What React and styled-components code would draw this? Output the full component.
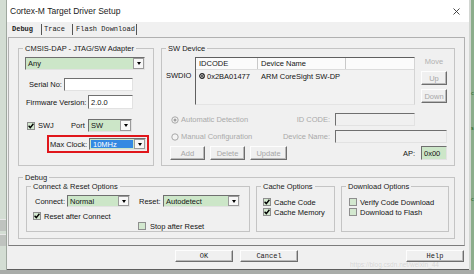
import React from "react";
import styled, { createGlobalStyle } from "styled-components";

const GlobalStyle = createGlobalStyle`
  html, body {
    margin: 0;
    padding: 0;
    background: #b1b4b1;
  }
  body {
    font-family: "Liberation Sans", Arial, sans-serif;
    font-size: 7.5px;
    color: #141414;
  }
  * {
    box-sizing: border-box;
  }
`;

const Screen = styled.div`
  position: relative;
  display: flex;
  width: 474px;
  height: 274px;
  overflow: hidden;
  background: #a9aca9;
`;

const LeftStrip = styled.div`
  width: 7px;
  height: 270px;
  background: #d3ddd3;
  border-right: 1px solid #9fa89f;
  display: flex;
  flex-direction: column;
  justify-content: flex-end;
  gap: 3px;
  padding-bottom: 24px;
`;

const StripBlock = styled.div`
  height: 12px;
  background: #bfc3bf;
  border-top: 1px solid #e8e8e8;
`;

const RightStrip = styled.div`
  width: 5px;
  height: 270px;
  background: #8bad8b;
  border-left: 2px solid #d2d6d2;
  display: flex;
  flex-direction: column;
  padding-top: 91px;
  color: #2d6b2d;
  font-weight: bold;
  font-size: 4px;
`;

const StripLetter = styled.span`
  margin-top: ${(p) => p.$mt}px;
  line-height: 5px;
`;

const Window = styled.div`
  width: 462px;
  height: 270px;
  display: flex;
  flex-direction: column;
  background: #f0f0f0;
  border-bottom: 1px solid #5e5e5e;
`;

const TitleBar = styled.div`
  height: 22px;
  flex: none;
  background: #fff;
  display: flex;
  align-items: center;
  justify-content: space-between;
  padding: 0 9px 0 3px;
  font-size: 8.5px;
  color: #1b1b1b;
`;

const Tabs = styled.div`
  height: 15px;
  flex: none;
  display: flex;
  align-items: center;
  padding-left: 5px;
  font-family: "Liberation Mono", "Courier New", monospace;
  font-size: 7px;
`;

const Tab = styled.div`
  height: 11px;
  line-height: 11px;
  padding: 0 ${(p) => p.$pr}px 0 ${(p) => p.$pl}px;
  border-right: 1px solid #555;
  font-weight: ${(p) => (p.$active ? "bold" : "normal")};
  color: #222;
`;

const TabPage = styled.div`
  margin-left: 1px;
  width: 457px;
  height: 209px;
  flex: none;
  border: 1px solid #b0b0b0;
  border-bottom-color: #7c7c7c;
  padding: 6px 9px 0;
  display: flex;
  flex-direction: column;
`;

const TopRow = styled.div`
  display: flex;
  gap: 7px;
  height: 122px;
`;

const Group = styled.fieldset`
  margin: 0;
  padding: 0;
  min-width: 0;
  width: ${(p) => p.$w}px;
  height: ${(p) => p.$h}px;
  margin-top: ${(p) => p.$mt || 0}px;
  border: 1px solid #c4c4c4;
  flex: none;
`;

const Legend = styled.legend`
  padding: 0 2px;
  margin-left: 4px;
  font-size: 7.5px;
  line-height: 9px;
  color: #1a1a1a;
`;

const Body = styled.div`
  display: flex;
  flex-direction: column;
  padding: ${(p) => p.$pad};
`;

const Row = styled.div`
  display: flex;
  align-items: ${(p) => (p.$top ? "flex-start" : "center")};
  height: ${(p) => p.$h || 13}px;
  margin-top: ${(p) => p.$mt || 0}px;
  padding-left: ${(p) => p.$pl || 0}px;
  gap: ${(p) => p.$gap || 0}px;
`;

const Label = styled.span`
  width: ${(p) => (p.$w ? `${p.$w}px` : "auto")};
  flex: none;
  white-space: nowrap;
  margin-left: ${(p) => p.$ml || 0}px;
  color: ${(p) => (p.$disabled ? "#a9a9a9" : "#141414")};
`;

const Field = styled.div`
  width: ${(p) => p.$w}px;
  height: ${(p) => p.$h || 13}px;
  flex: none;
  margin-left: ${(p) => p.$ml || 0}px;
  display: flex;
  align-items: stretch;
  background: ${(p) => (p.$green ? "#cce6c8" : p.$disabled ? "#f0f0f0" : "#fff")};
  border: 1px solid;
  border-color: #6f6f6f #e2e2e2 #e2e2e2 #6f6f6f;
`;

const FieldText = styled.span`
  flex: 1;
  display: flex;
  align-items: center;
  padding-left: 2px;
  white-space: nowrap;
  background: ${(p) => (p.$selected ? "#3489e2" : "transparent")};
  color: ${(p) => (p.$selected ? "#fff" : "#141414")};
  margin: ${(p) => (p.$selected ? "1px" : "0")};
`;

const Arrow = styled.span`
  width: 11px;
  flex: none;
  display: flex;
  align-items: center;
  justify-content: center;
  background: #f7f7f7;
  border: 1px solid #9a9a9a;
  &::after {
    content: "";
    border-left: 2.5px solid transparent;
    border-right: 2.5px solid transparent;
    border-top: 3px solid #000;
  }
`;

const Select = ({ w, h, value, green = true, selected, ml }) => (
  <Field $w={w} $h={h} $green={green} $ml={ml}>
    <FieldText $selected={selected}>{value}</FieldText>
    <Arrow />
  </Field>
);

const Input = ({ w, h, value, green, disabled, ml }) => (
  <Field $w={w} $h={h} $green={green} $disabled={disabled} $ml={ml}>
    <FieldText>{value}</FieldText>
  </Field>
);

const CheckBox = styled.span`
  width: 8px;
  height: 8px;
  flex: none;
  background: #d3e8cf;
  border: 1px solid #8e8e8e;
  display: flex;
  align-items: center;
  justify-content: center;
`;

const Check = ({ checked }) => (
  <CheckBox>
    {checked && (
      <svg width="6" height="6" viewBox="0 0 6 6">
        <polyline points="0.6,2.8 2.3,4.6 5.4,0.8" fill="none" stroke="#000" strokeWidth="1.4" />
      </svg>
    )}
  </CheckBox>
);

const RadioIcon = ({ filled }) => (
  <svg width="8" height="8" viewBox="0 0 8 8" style={{ flex: "none" }}>
    <circle cx="4" cy="4" r="3.2" fill="#f4f4f4" stroke="#a8a8a8" strokeWidth="1" />
    {filled && <circle cx="4" cy="4" r="1.5" fill="#a0a0a0" />}
  </svg>
);

const WinButton = styled.div`
  width: ${(p) => p.$w}px;
  height: ${(p) => p.$h}px;
  flex: none;
  display: flex;
  align-items: center;
  justify-content: center;
  background: #f0f0f0;
  border: 1px solid;
  border-color: #fdfdfd #6e6e6e #6e6e6e #fdfdfd;
  box-shadow: inset -1px -1px 0 #b9b9b9;
  color: ${(p) => (p.$disabled ? "#a7a7a7" : "#1a1a1a")};
  font-family: ${(p) =>
    p.$mono ? '"Liberation Mono", "Courier New", monospace' : "inherit"};
  font-size: ${(p) => (p.$mono ? 7 : 7.5)}px;
`;

const RedBox = styled.div`
  margin: 3px 0 0 22px;
  width: 102px;
  height: 18px;
  border: 2px solid #e0161b;
  display: flex;
  align-items: center;
  padding-left: 1px;
`;

const SwdioLabel = styled.span`
  width: 29px;
  flex: none;
  padding-top: 14px;
`;

const Table = styled.div`
  width: 220px;
  height: 48px;
  flex: none;
  background: #f2f2f2;
  border: 1px solid;
  border-color: #5f5f5f #d4d4d4 #e4e4e4 #5f5f5f;
  display: flex;
  flex-direction: column;
`;

const TRow = styled.div`
  display: flex;
  height: 12px;
  flex: none;
  background: ${(p) => (p.$head ? "#fbfbfb" : "transparent")};
  border-bottom: ${(p) => (p.$head ? "1px solid #dcdcdc" : "none")};
`;

const TCell = styled.div`
  width: ${(p) => (p.$w ? `${p.$w}px` : "auto")};
  flex: ${(p) => (p.$w ? "none" : 1)};
  display: flex;
  align-items: center;
  gap: 2px;
  padding-left: 3px;
  white-space: nowrap;
  border-right: ${(p) => (p.$head && p.$w ? "1px solid #c9c9c9" : "none")};
`;

const SideCol = styled.div`
  width: 26px;
  margin-left: 6px;
  display: flex;
  flex-direction: column;
  gap: 4px;
`;

const MoveLabel = styled.span`
  height: 10px;
  line-height: 10px;
  text-align: center;
  color: #b0b0b0;
`;

const Spacer = styled.div`
  flex: 1;
`;

const Radio = styled.div`
  display: flex;
  align-items: center;
  gap: 2px;
  margin-left: 5px;
  color: #aaaaaa;
`;

const DebugBody = styled.div`
  display: flex;
  gap: 6px;
  padding-left: 7px;
`;

const ButtonRow = styled.div`
  display: flex;
  height: 12px;
  margin-top: 4px;
  padding: 0 5px 0 168px;
  gap: 7px;
`;

const Watermark = styled.span`
  position: absolute;
  left: 350px;
  top: 261px;
  font-size: 6.5px;
  color: rgba(150, 150, 150, 0.3);
  white-space: nowrap;
`;

export default function App() {
  return (
    <>
      <GlobalStyle />
      <Screen>
        <LeftStrip>
          <StripBlock />
          <StripBlock />
        </LeftStrip>
        <Window>
          <TitleBar>
            <span>Cortex-M Target Driver Setup</span>
            <svg width="7" height="7" viewBox="0 0 7 7">
              <path d="M0.5 0.5 L6.5 6.5 M6.5 0.5 L0.5 6.5" stroke="#333" strokeWidth="0.9" />
            </svg>
          </TitleBar>

          <Tabs>
            <Tab $active $pl={0} $pr={8}>Debug</Tab>
            <Tab $pl={2} $pr={7}>Trace</Tab>
            <Tab $pl={3} $pr={1}>Flash Download</Tab>
          </Tabs>

          <TabPage>
            <TopRow>
              <Group $w={136} $h={122}>
                <Legend>CMSIS-DAP - JTAG/SW Adapter</Legend>
                <Body $pad="4px 0 0 6px">
                  <Select w={120} h={13} value="Any" />
                  <Row $mt={8} $pl={4}>
                    <Label $w={35}>Serial No:</Label>
                    <Input w={69} h={13} value="" />
                  </Row>
                  <Row $mt={4} $h={14} $pl={1}>
                    <Label $w={62}>Firmware Version:</Label>
                    <Input w={45} h={14} value="2.0.0" />
                  </Row>
                  <Row $mt={10} $pl={2}>
                    <Check checked />
                    <Label $w={33} $ml={3}>SWJ</Label>
                    <Label $w={17}>Port</Label>
                    <Select w={44} h={13} value="SW" />
                  </Row>
                  <RedBox>
                    <Label $w={39}>Max Clock:</Label>
                    <Select w={57} h={12} value="10MHz" selected />
                  </RedBox>
                </Body>
              </Group>

              <Group $w={294} $h={122}>
                <Legend>SW Device</Legend>
                <Body $pad="4px 7px 0 4px">
                  <Row $h={48} $top>
                    <SwdioLabel>SWDIO</SwdioLabel>
                    <Table>
                      <TRow $head>
                        <TCell $head $w={62}>IDCODE</TCell>
                        <TCell $head $w={88}>Device Name</TCell>
                        <TCell $head />
                      </TRow>
                      <TRow>
                        <TCell $w={62}>
                          <svg width="6" height="6" viewBox="0 0 6 6">
                            <circle cx="3" cy="3" r="2.3" fill="none" stroke="#222" strokeWidth="1.2" />
                            <circle cx="3" cy="3" r="0.9" fill="#222" />
                          </svg>
                          0x2BA01477
                        </TCell>
                        <TCell $w={88}>ARM CoreSight SW-DP</TCell>
                        <TCell />
                      </TRow>
                    </Table>
                    <SideCol>
                      <MoveLabel>Move</MoveLabel>
                      <WinButton $w={26} $h={14} $disabled>Up</WinButton>
                      <WinButton $w={26} $h={14} $disabled>Down</WinButton>
                    </SideCol>
                  </Row>
                  <Row $mt={8}>
                    <Radio>
                      <RadioIcon filled />
                      <span>Automatic Detection</span>
                    </Radio>
                    <Spacer />
                    <Label $disabled>ID CODE:</Label>
                    <Input w={80} h={13} disabled ml={5} />
                    <Spacer style={{ flex: "none", width: 32 }} />
                  </Row>
                  <Row $mt={4}>
                    <Radio>
                      <RadioIcon />
                      <span>Manual Configuration</span>
                    </Radio>
                    <Spacer />
                    <Label $disabled>Device Name:</Label>
                    <Input w={112} h={13} disabled ml={5} />
                  </Row>
                  <Row $mt={3} $h={14} $pl={4} $gap={5}>
                    <WinButton $w={35} $h={14} $disabled>Add</WinButton>
                    <WinButton $w={35} $h={14} $disabled>Delete</WinButton>
                    <WinButton $w={37} $h={14} $disabled>Update</WinButton>
                    <Spacer />
                    <Label>AP:</Label>
                    <Input w={26} h={14} green value="0x00" ml={1} />
                  </Row>
                </Body>
              </Group>
            </TopRow>

            <Group $w={437} $h={66} $mt={7}>
              <Legend>Debug</Legend>
              <DebugBody>
                <Group $w={224} $h={50}>
                  <Legend>Connect &amp; Reset Options</Legend>
                  <Body $pad="4px 0 0 6px">
                    <Row $h={12} $pl={2}>
                      <Label $w={32}>Connect:</Label>
                      <Select w={63} h={12} value="Normal" />
                      <Label $w={24} $ml={9}>Reset:</Label>
                      <Select w={77} h={12} value="Autodetect" />
                    </Row>
                    <Row $h={8} $mt={5} $gap={3}>
                      <Check checked />
                      <Label>Reset after Connect</Label>
                    </Row>
                    <Row $h={8} $mt={2} $pl={105} $gap={4}>
                      <Check />
                      <Label>Stop after Reset</Label>
                    </Row>
                  </Body>
                </Group>

                <Group $w={79} $h={50}>
                  <Legend>Cache Options</Legend>
                  <Body $pad="7px 0 0 6px">
                    <Row $h={8} $gap={3}>
                      <Check checked />
                      <Label>Cache Code</Label>
                    </Row>
                    <Row $h={8} $mt={2} $gap={3}>
                      <Check checked />
                      <Label>Cache Memory</Label>
                    </Row>
                  </Body>
                </Group>

                <Group $w={108} $h={50}>
                  <Legend>Download Options</Legend>
                  <Body $pad="7px 0 0 7px">
                    <Row $h={8} $gap={3}>
                      <Check />
                      <Label>Verify Code Download</Label>
                    </Row>
                    <Row $h={8} $mt={2} $gap={3}>
                      <Check />
                      <Label>Download to Flash</Label>
                    </Row>
                  </Body>
                </Group>
              </DebugBody>
            </Group>
          </TabPage>

          <ButtonRow>
            <WinButton $w={58} $h={12} $mono>OK</WinButton>
            <WinButton $w={58} $h={12} $mono>Cancel</WinButton>
            <Spacer />
            <WinButton $w={58} $h={12} $mono>Help</WinButton>
          </ButtonRow>
        </Window>
        <RightStrip>
          <StripLetter $mt={0}>C</StripLetter>
          <StripLetter $mt={30}>S</StripLetter>
          <StripLetter $mt={66}>C</StripLetter>
        </RightStrip>
        <Watermark>https://blog.csdn.net/weixin_44</Watermark>
      </Screen>
    </>
  );
}
